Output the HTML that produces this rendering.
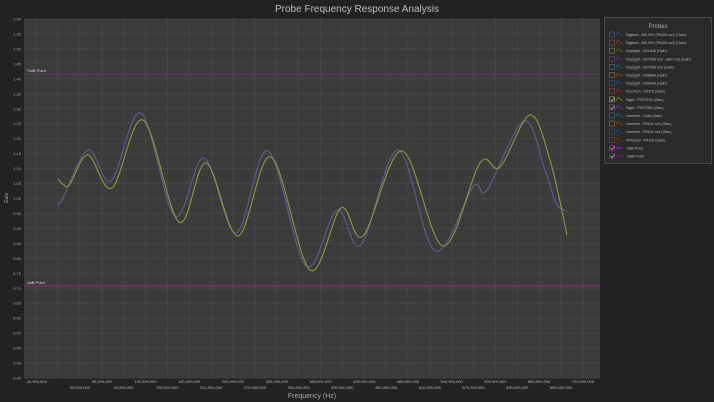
<!DOCTYPE html>
<html><head><meta charset="utf-8"><style>
html,body{margin:0;padding:0;background:#222;width:714px;height:402px;overflow:hidden;font-family:"Liberation Sans",sans-serif;}
</style></head><body>
<svg width="714" height="402" xmlns="http://www.w3.org/2000/svg" style="position:absolute;left:0;top:0">
<rect width="714" height="402" fill="#222"/>
<text x="357" y="12" fill="#bdbdbd" font-size="10" text-anchor="middle" font-family="Liberation Sans">Probe Frequency Response Analysis</text>
<rect x="24" y="19" width="576" height="359" fill="#3b3b3b"/>
<g id="grid" stroke="#474747" stroke-width="0.8"></g>
<g id="ylab" fill="#aaa" font-size="4" font-family="Liberation Sans" text-anchor="end"></g>
<g id="xlab" fill="#bbb" font-size="4" font-family="Liberation Sans" text-anchor="middle"></g>
<line x1="24" y1="74" x2="600" y2="74" stroke="#62406a" stroke-width="1"/>
<line x1="24" y1="286" x2="600" y2="286" stroke="#85307f" stroke-width="1"/>
<text x="26" y="72" fill="#ddd" font-size="4">+3dB Point</text>
<text x="26" y="284" fill="#ddd" font-size="4">-3dB Point</text>
<path id="pp" fill="none" stroke="#6a5890" stroke-width="1.1"/>
<path id="gp" fill="none" stroke="#8c9a40" stroke-width="1.1"/>
<text x="312" y="398" fill="#aaa" font-size="7" text-anchor="middle">Frequency (Hz)</text>
<text x="8" y="198" fill="#aaa" font-size="5" text-anchor="middle" transform="rotate(-90 8 198)">Gain</text>
<rect x="604.5" y="17.5" width="107" height="146" fill="#2a2a2a" stroke="#4a4a4a"/>
<text x="658" y="28" fill="#aaa" font-size="6" text-anchor="middle">Probes</text>
<g id="leg" font-size="3.6" fill="#bbb"></g>
</svg>
<script>
var ns="http://www.w3.org/2000/svg";
function el(p,t,a,txt){var e=document.createElementNS(ns,t);for(var k in a)e.setAttribute(k,a[k]);if(txt)e.textContent=txt;document.getElementById(p).appendChild(e);return e;}
for(var i=0;i<=24;i++){var y=19+i*359/24;el('grid','line',{x1:24,x2:600,y1:y,y2:y});el('ylab','text',{x:21,y:y+1.5},(1.6-i*0.05).toFixed(2));}
for(var k=-1;k<=24;k++){var x=58+k*21.87;if(x<24||x>600)continue;el('grid','line',{x1:x,x2:x,y1:19,y2:378});}
for(var k=-1;k<=24;k++){var x=58+k*21.87;if(x<24||x>600)continue;var f=k*30;var s=(f<0?"-":"")+Math.abs(f)+",000,000";if(f==0)continue;
 var bottom=(k>0&&k%2==1); el('xlab','text',{x:x,y:bottom?389:383},s);}
function cr(pts){var d="M"+pts[0];for(var i=0;i<pts.length-1;i++){var p0=pts[i-1]||pts[i],p1=pts[i],p2=pts[i+1],p3=pts[i+2]||p2;
 d+=" C"+(p1[0]+(p2[0]-p0[0])/6)+","+(p1[1]+(p2[1]-p0[1])/6)+" "+(p2[0]-(p3[0]-p1[0])/6)+","+(p2[1]-(p3[1]-p1[1])/6)+" "+p2;}return d;}
var g=[[58,179],[64,185],[70,184],[88,155],[112,188],[143,120],[179,222],[206,163],[238,236],[271,157],[310,270],[341,208],[363,236],[402,151],[443,246],[480,163],[500,167],[530,115],[550,160],[567,235]];
var p=[[58,202],[62,200],[88,150],[111,181],[141,113],[175,216],[204,158],[236,233],[268,151],[306,266],[337,210],[361,245],[398,150],[435,251],[473,187],[487,190],[524,121],[545,170],[556,203],[566,211]];
document.getElementById('gp').setAttribute('d',cr(g));document.getElementById('pp').setAttribute('d',cr(p));
var L=[["Digilent - 460-004 (P6100 no1) (Gain)","#3e5e7e"],["Digilent - 460-004 (P6100 no2) (Gain)","#8a4a3a"],["Keysight - N2140A (Gain)","#6a7a2e"],["Keysight - N2795A no2 - After Cal (Gain)","#5a3e7e"],["Keysight - N2795A no2 (Gain)","#2e6e7a"],["Keysight - N2889A (Gain)","#8a5e2e"],["Keysight - N2894A (Gain)","#2e4e7e"],["PicoTech - TA375 (Gain)","#8a3a3a"],["Rigol - PVP2150 (Gain)","#8a9a3a",1],["Rigol - PVP2350 (Gain)","#6a4e9a",1],["Yourmile - Coax (Gain)","#2e6e7a"],["Yourmile - P6100 no3 (Gain)","#9a5a2a"],["Yourmile - P6100 no4 (Gain)","#2e4e7e"],["YPioneer - P4100 (Gain)","#7a3a2a"],["-3dB Point","#a02aa0",1,1],["+3dB Point","#7a2a8a",1,1]];
L.forEach(function(r,i){var y=35+i*8.1;el('leg','rect',{x:609.5,y:y-3,width:5,height:5,fill:"none",stroke:r[1],"stroke-width":0.8});
 if(r[2])el('leg','path',{d:"M610.5 "+(y-0.5)+" l1.5 1.5 l2.5 -3",fill:"none",stroke:"#ccc","stroke-width":0.6});
 if(r[3])el('leg','line',{x1:616,x2:623,y1:y-0.5,y2:y-0.5,stroke:r[1],"stroke-width":1});
 else el('leg','path',{d:"M616 "+(y+1)+" q2 -5 3.5 -2.5 t3.5 1.5",fill:"none",stroke:r[1],"stroke-width":0.6});
 el('leg','text',{x:626,y:y+1},r[0]);});
</script>
</body></html>
